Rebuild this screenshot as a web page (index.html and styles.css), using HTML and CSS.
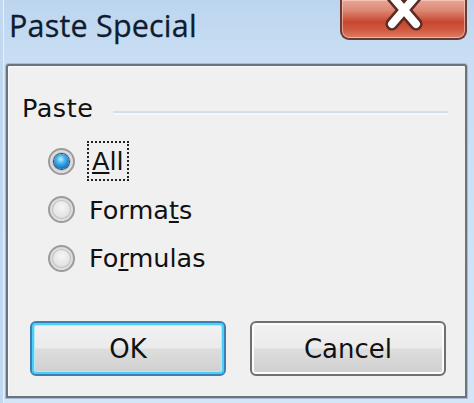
FILE: index.html
```html
<!DOCTYPE html>
<html>
<head>
<meta charset="utf-8">
<link rel="stylesheet" href="styles.css">
</head>
<body>
<div class="window">
  <div class="titlebar">
    <div class="title">Paste Special</div>
    <div class="close">
      <svg width="46" height="34" viewBox="0 0 46 34">
        <path d="M11 -4 L35 24 M35 -4 L11 24" stroke="#5a2a24" stroke-width="13" stroke-linecap="round"/>
        <path d="M11 -4 L35 24 M35 -4 L11 24" stroke="#ffffff" stroke-width="8" stroke-linecap="round"/>
      </svg>
    </div>
  </div>
  <div class="client">
    <div class="group-head">
      <span class="group-label">Paste</span>
      <span class="group-line"></span>
    </div>
    <div class="options">
      <div class="option">
        <span class="radio checked"><span class="dot"></span></span>
        <span class="label focus"><u>A</u>ll</span>
      </div>
      <div class="option">
        <span class="radio"></span>
        <span class="label">Forma<u>t</u>s</span>
      </div>
      <div class="option">
        <span class="radio"></span>
        <span class="label">Fo<u>r</u>mulas</span>
      </div>
    </div>
    <div class="buttons">
      <div class="btn default">OK</div>
      <div class="btn">Cancel</div>
    </div>
  </div>
</div>
</body>
</html>
```
FILE: styles.css
```css
html, body {
  margin: 0;
  padding: 0;
}
body {
  width: 474px;
  height: 403px;
  overflow: hidden;
  background: #cfe2f5;
}
.window {
  width: 474px;
  height: 403px;
  display: flex;
  flex-direction: column;
  background: linear-gradient(to bottom, #bcd5ee 0px, #c9def3 60px, #d3e6f8 403px);
  box-shadow: inset 3px 0 0 #c2d8ee, inset 4px 0 0 #e4f0fb;
}
.titlebar {
  height: 64px;
  display: flex;
  justify-content: space-between;
  align-items: flex-start;
}
.title {
  font-family: "Open Sans", "Noto Sans", sans-serif;
  font-size: 30.5px;
  color: #0f1c30;
  margin-left: 9px;
  margin-top: 3px;
  line-height: 44px;
  letter-spacing: 0.2px;
  -webkit-text-stroke: 0.3px #0f1c30;
}
.close {
  width: 123px;
  height: 38px;
  margin-right: 7px;
  border: 2px solid #6a3a34;
  border-top: none;
  border-radius: 0 0 9px 9px;
  background: linear-gradient(to bottom, #e8a797 0px, #dc8a76 10px, #c8462f 22px, #cf5a42 30px, #e07e66 38px);
  box-shadow: inset 0 0 0 1px rgba(255,220,210,0.55);
  display: flex;
  justify-content: center;
  align-items: flex-start;
}
.client {
  margin: 0 7px 5px 6px;
  flex: 1;
  background: #f0f0f0;
  border: 2px solid #6b747e;
  border-radius: 3px 3px 0 0;
  box-shadow: inset 1px 1px 0 #fafafa, 0 0 0 1px #a9bccf;
  display: flex;
  flex-direction: column;
  font-family: "DejaVu Sans", sans-serif;
  font-size: 25.5px;
  color: #111;
}
.group-head {
  display: flex;
  align-items: center;
  margin: 25px 17px 0 14px;
  height: 34px;
}
.group-label {
  line-height: 34px;
  letter-spacing: 0.5px;
}
.group-line {
  flex: 1;
  height: 2px;
  background: #d5dfe7;
  margin-left: 20px;
  margin-top: 7px;
  box-shadow: 0 2px 0 #f7f7f7;
}
.options {
  display: flex;
  flex-direction: column;
  margin-left: 40px;
  margin-top: 12px;
}
.option {
  height: 48.5px;
  display: flex;
  align-items: center;
}
.radio {
  width: 23px;
  height: 23px;
  border-radius: 50%;
  border: 2px solid #9c9c9c;
  background: radial-gradient(circle at 50% 40%, #f6f6f6 0%, #e2e2e2 55%, #cfcfcf 100%);
  box-shadow: inset 0 0 0 2px #dedede, inset 0 0 0 3px #c2c2c2;
  display: flex;
  align-items: center;
  justify-content: center;
}
.radio.checked {
  background: #e9e9e9;
}
.dot {
  width: 15px;
  height: 15px;
  border-radius: 50%;
  background: radial-gradient(circle at 45% 35%, #c8eeff 0%, #4cb7f0 30%, #1677c4 70%, #0e4e8f 100%);
  box-shadow: 0 0 0 1px #1a4f82;
}
.label {
  margin-left: 14px;
  line-height: 36px;
}
.label.focus {
  margin-left: 12px;
  padding: 0 3px;
  border: 2px dotted #222;
}
.label u {
  text-decoration-thickness: 2px;
  text-underline-offset: 2px;
}
.buttons {
  display: flex;
  gap: 24px;
  margin: auto 0 20px 22px;
}
.btn {
  width: 192px;
  height: 51px;
  border: 2px solid #707070;
  border-radius: 6px;
  background: linear-gradient(to bottom, #f2f2f2 0%, #ebebeb 48%, #dddddd 52%, #cfcfcf 100%);
  box-shadow: inset 0 0 0 2px #fcfcfc;
  display: flex;
  align-items: center;
  justify-content: center;
  font-size: 26px;
  color: #111;
}
.btn.default {
  border-color: #3c7fb1;
  box-shadow: inset 0 0 0 2px #48d0f8, inset 0 0 0 3px #b6e6f8;
}
```
